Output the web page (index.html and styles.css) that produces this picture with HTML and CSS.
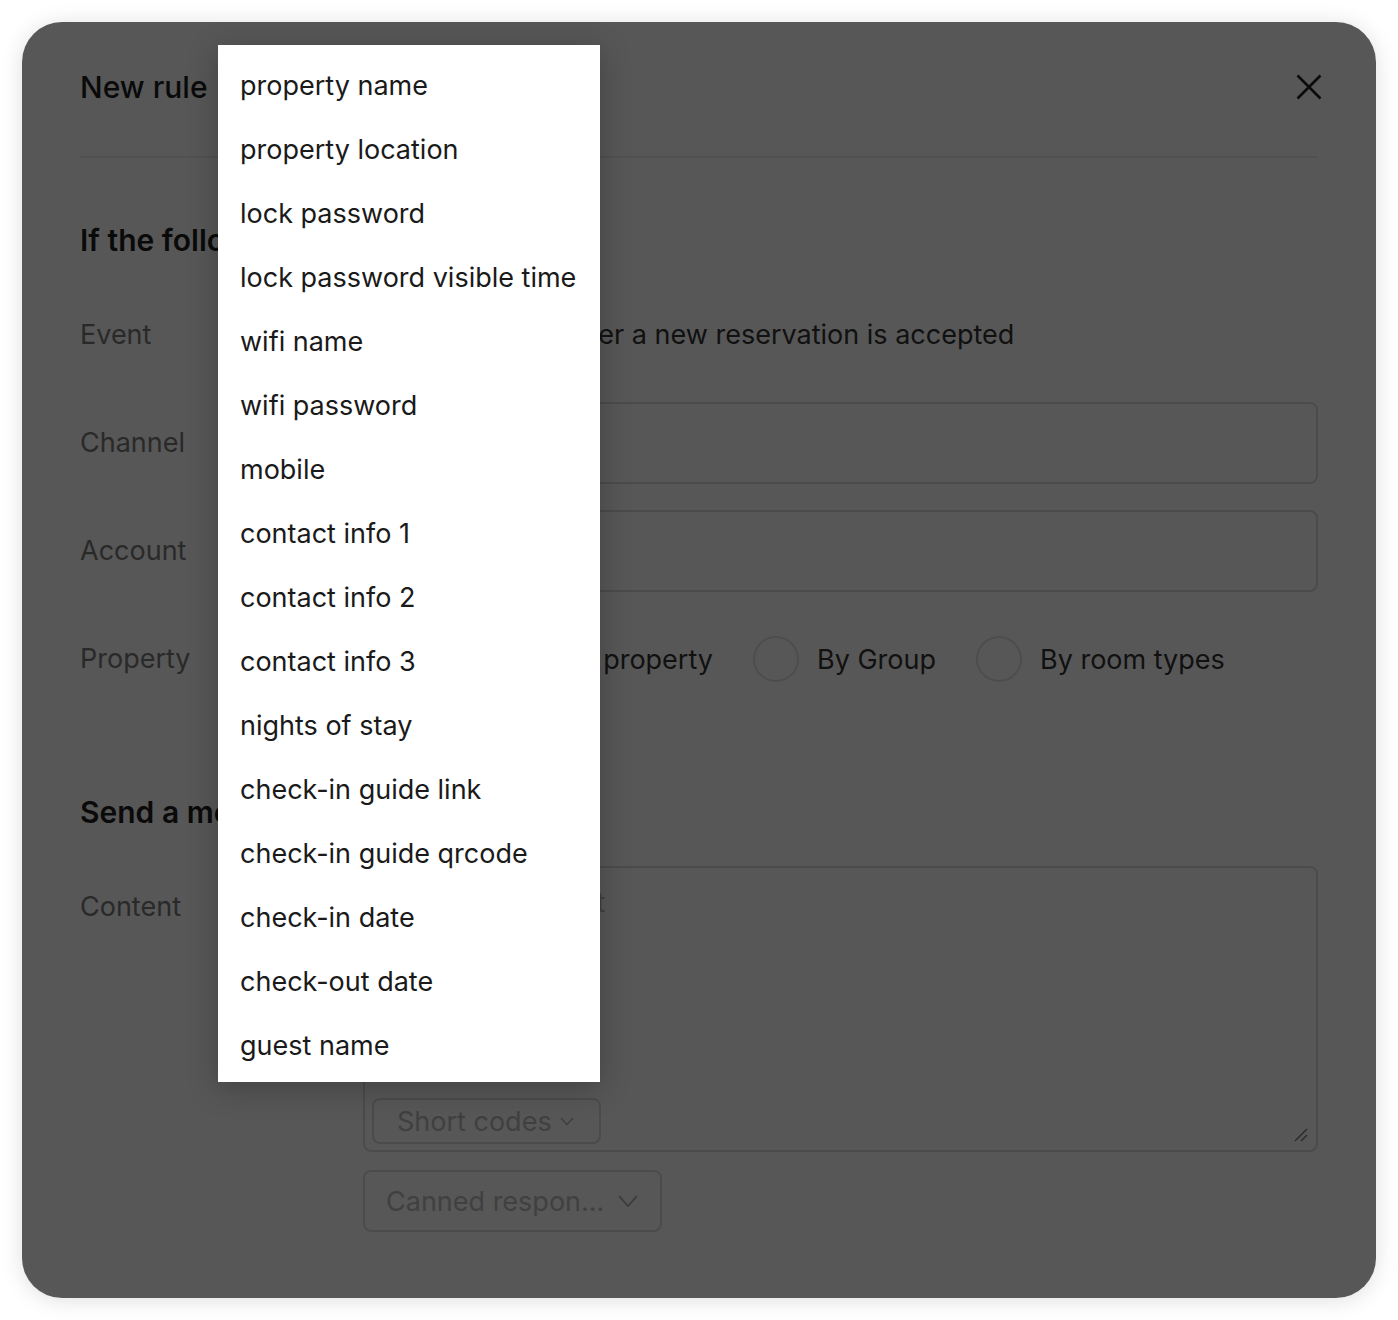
FILE: index.html
```html
<!DOCTYPE html>
<html lang="en">
<head>
    <meta charset="UTF-8">
    <meta name="viewport" content="width=device-width, initial-scale=1.0">
    <title>New rule</title>
    <link rel="stylesheet" href="styles.css">
</head>
<body>
    <div class="modal">
        <div class="modal-header">
            <h1>New rule</h1>
            <button class="close" type="button" aria-label="Close">
                <svg width="26" height="26" viewBox="0 0 26 26"><path d="M1.5 1.5 L24.5 24.5 M24.5 1.5 L1.5 24.5" stroke="#222" stroke-width="2.6" fill="none"/></svg>
            </button>
        </div>

        <div class="modal-body">
            <h2>If the following happens</h2>

            <div class="row">
                <div class="label">Event</div>
                <div class="value text-value">Sends instantly after a new reservation is accepted</div>
            </div>
            <div class="row">
                <div class="label">Channel</div>
                <div class="value"><div class="select"></div></div>
            </div>
            <div class="row">
                <div class="label">Account</div>
                <div class="value"><div class="select"></div></div>
            </div>
            <div class="row">
                <div class="label">Property</div>
                <div class="value radios">
                    <label class="radio"><span class="circle"></span>All</label>
                    <label class="radio"><span class="circle"></span>By property</label>
                    <label class="radio"><span class="circle"></span>By Group</label>
                    <label class="radio"><span class="circle"></span>By room types</label>
                </div>
            </div>

            <h2 class="section-gap">Send a message</h2>

            <div class="row">
                <div class="label">Content</div>
                <div class="value">
                    <div class="editor">
                        <div class="placeholder">Enter the content</div>
                        <div class="editor-foot">
                            <button class="codes" type="button">Short codes
                                <svg width="14" height="9" viewBox="0 0 14 9"><path d="M1 1 L7 7.5 L13 1" stroke="#bbb" stroke-width="1.6" fill="none"/></svg>
                            </button>
                            <svg class="grip" width="14" height="14" viewBox="0 0 14 14"><path d="M13 1 L1 13 M13 7 L7 13" stroke="#777" stroke-width="1.4"/></svg>
                        </div>
                    </div>
                    <div class="canned">
                        <span>Canned respon...</span>
                        <svg width="20" height="12" viewBox="0 0 20 12"><path d="M1 1 L10 11 L19 1" stroke="#aaa" stroke-width="1.8" fill="none"/></svg>
                    </div>
                </div>
            </div>
        </div>

        <div class="mask"></div>

        <ul class="menu">
            <li>property name</li>
            <li>property location</li>
            <li>lock password</li>
            <li>lock password visible time</li>
            <li>wifi name</li>
            <li>wifi password</li>
            <li>mobile</li>
            <li>contact info 1</li>
            <li>contact info 2</li>
            <li>contact info 3</li>
            <li>nights of stay</li>
            <li>check-in guide link</li>
            <li>check-in guide qrcode</li>
            <li>check-in date</li>
            <li>check-out date</li>
            <li>guest name</li>
        </ul>
    </div>
</body>
</html>
```

FILE: styles.css
```css
/* General */
body {
    margin: 0;
    background: #ffffff;
    font-family: Inter, "Noto Sans", sans-serif;
    color: #222;
}

.modal {
    position: relative;
    margin: 22px;
    height: 1276px;
    box-sizing: border-box;
    padding: 0 58px;
    background: #ffffff;
    border-radius: 40px;
    box-shadow: 0 2px 22px rgba(0, 0, 0, 0.13);
    overflow: hidden;
}

/* Header */
.modal-header {
    display: flex;
    align-items: center;
    justify-content: space-between;
    height: 136px;
    padding-bottom: 4px;
    box-sizing: border-box;
    border-bottom: 2px solid #ececec;
}

h1 {
    margin: 0;
    font-size: 30px;
    font-weight: 500;
    color: #1f1f1f;
}

.close {
    border: none;
    background: none;
    padding: 0;
    margin-right: -4px;
    display: flex;
}

/* Body */
h2 {
    margin: 62px 0 34px;
    height: 40px;
    line-height: 40px;
    font-size: 30px;
    font-weight: 600;
    color: #1f1f1f;
}

h2.section-gap {
    margin-top: 92px;
}

.row {
    display: flex;
    align-items: flex-start;
    margin-bottom: 26px;
}

.label {
    width: 283px;
    flex-shrink: 0;
    line-height: 82px;
    font-size: 27px;
    color: #7a7a7a;
}

.value {
    flex: 1;
    font-size: 27px;
}

.text-value {
    line-height: 82px;
    color: #333;
    white-space: nowrap;
}

.select {
    height: 82px;
    box-sizing: border-box;
    border: 2px solid #dcdcdc;
    border-radius: 8px;
}

/* Radio group */
.radios {
    display: flex;
    align-items: center;
    height: 82px;
    gap: 40px;
}

.radio {
    display: flex;
    align-items: center;
    gap: 18px;
    color: #333;
}

.circle {
    width: 46px;
    height: 46px;
    box-sizing: border-box;
    border: 2px solid #e2e2e2;
    border-radius: 50%;
}

/* Content editor */
.editor {
    height: 286px;
    box-sizing: border-box;
    border: 2px solid #dcdcdc;
    border-radius: 8px;
    display: flex;
    flex-direction: column;
    justify-content: space-between;
    padding: 18px 6px 6px 7px;
}

.placeholder {
    padding-left: 14px;
    color: #bdbdbd;
}

.editor-foot {
    display: flex;
    align-items: flex-end;
    justify-content: space-between;
}

.codes {
    display: flex;
    align-items: center;
    gap: 8px;
    height: 46px;
    width: 229px;
    box-sizing: border-box;
    padding: 0 0 0 23px;
    border: 2px solid #dcdcdc;
    border-radius: 8px;
    background: #fff;
    font-family: inherit;
    font-size: 27px;
    color: #bcbcbc;
}

.grip {
    margin: 0 2px 2px 0;
}

.canned {
    margin-top: 18px;
    width: 299px;
    height: 62px;
    box-sizing: border-box;
    border: 2px solid #dcdcdc;
    border-radius: 8px;
    display: flex;
    align-items: center;
    justify-content: space-between;
    padding: 0 22px 0 21px;
    color: #bcbcbc;
}

/* Dim layer and short-code menu */
.mask {
    position: absolute;
    inset: 0;
    background: rgba(0, 0, 0, 0.66);
}

.menu {
    position: absolute;
    left: 196px;
    top: 23px;
    width: 382px;
    margin: 0;
    padding: 9px 0 4px;
    list-style: none;
    background: #ffffff;
    box-shadow: 0 6px 28px rgba(0, 0, 0, 0.25);
}

.menu li {
    height: 64px;
    line-height: 64px;
    padding: 0 22px;
    font-size: 27px;
    color: #1a1a1a;
    white-space: nowrap;
}
```
